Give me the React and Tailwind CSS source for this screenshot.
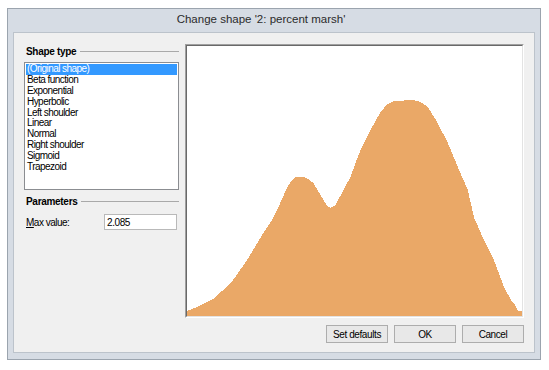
const shapes = [
  '(Original shape)',
  'Beta function',
  'Exponential',
  'Hyperbolic',
  'Left shoulder',
  'Linear',
  'Normal',
  'Right shoulder',
  'Sigmoid',
  'Trapezoid',
];

// curve outline in screen pixels, shifted to the chart's inner origin (187,46)
const curve = [
  [187, 311], [197, 307], [207, 302], [213, 299], [223, 290], [233, 280],
  [247, 260], [260, 238], [273, 218], [280, 203], [287, 187], [291, 181],
  [295, 177], [303, 177], [308, 179], [313, 183], [323, 200], [327, 206],
  [330, 208], [335, 205], [343, 190], [350, 177], [355, 163], [360, 150],
  [370, 130], [380, 112], [386, 105], [393, 101], [413, 100], [420, 102],
  [427, 107], [437, 123], [447, 143], [450, 150], [457, 167], [467, 190],
  [473, 217], [483, 240], [493, 260], [503, 287], [510, 300], [513, 303],
  [517, 311], [523, 311], [523, 320], [187, 320],
];
const points = curve.map(([x, y]) => `${x - 187},${y - 46}`).join(' ');

function GroupHeader({ label }) {
  return (
    <div className="flex items-center h-[12px]">
      <span className="ml-[2px] font-bold text-[10px] tracking-[-0.3px] text-black">{label}</span>
      <div className="flex-1 ml-[4px] border-t border-[#a9a9a9]" />
    </div>
  );
}

function Button({ children }) {
  return (
    <button className="w-[62px] h-[18px] border border-[#adadad] bg-[#e8e8e8] text-[10px] tracking-[-0.4px] text-black flex items-center justify-center">
      {children}
    </button>
  );
}

export default function App() {
  return (
    <div
      className="w-[549px] h-[370px] bg-white pt-[8px] pl-[7px]"
      style={{ fontFamily: '"Liberation Sans", Arial, sans-serif' }}
    >
      <div className="w-[534px] h-[352px] border border-[#9ba4ae] bg-[#d6dce4] flex flex-col">
        {/* Title */}
        <div className="h-[23px] flex items-center justify-center pr-[26px] pb-[1px] text-[11.5px] text-[#2b2b2b]">
          Change shape '2: percent marsh'
        </div>

        {/* Client */}
        <div className="mx-[5px] mb-[6px] h-[321px] border border-[#bcc3cb] bg-[#f0f0f0] flex flex-col px-[10px] pt-[11px]">
          <div className="flex h-[274px]">
            {/* Left column */}
            <div className="w-[155px] flex flex-col pt-[1px]">
              <GroupHeader label="Shape type" />
              <div className="mt-[5px] h-[128px] border border-[#8b8d91] bg-white p-[1px] text-[10px] tracking-[-0.55px] leading-[10.9px]">
                {shapes.map((s, i) => (
                  <div
                    key={s}
                    className={
                      i === 0
                        ? 'bg-[#3399ff] text-white pl-[1px] h-[10.9px]'
                        : 'text-black pl-[1px] h-[10.9px]'
                    }
                  >
                    {s}
                  </div>
                ))}
              </div>
              <div className="mt-[5px]">
                <GroupHeader label="Parameters" />
              </div>
              <div className="mt-[7px] flex items-center">
                <span className="ml-[2px] w-[78px] text-[10px] tracking-[-0.5px] text-black">
                  <span className="underline">M</span>ax value:
                </span>
                <div className="w-[73px] h-[16px] border border-[#b9b9b9] bg-white flex items-center pl-[2px] text-[10px] tracking-[-0.4px] text-black">
                  2.085
                </div>
              </div>
            </div>

            {/* Chart */}
            <div className="ml-[6px] flex-1 border-t border-l border-[#a0a0a0] border-r-white border-b-white border-r border-b">
              <div className="w-full h-full border-t border-l border-[#696969] border-r border-b border-r-[#e3e3e3] border-b-[#e3e3e3] bg-white overflow-hidden">
                <svg width="100%" height="100%" viewBox="0 0 334 270" preserveAspectRatio="none" shapeRendering="crispEdges">
                  <polygon points={points} fill="#eaa867" />
                </svg>
              </div>
            </div>
          </div>

          {/* Buttons */}
          <div className="mt-[7px] flex justify-end gap-[6px]">
            <Button>Set defaults</Button>
            <Button>OK</Button>
            <Button>Cancel</Button>
          </div>
        </div>
      </div>
    </div>
  );
}
